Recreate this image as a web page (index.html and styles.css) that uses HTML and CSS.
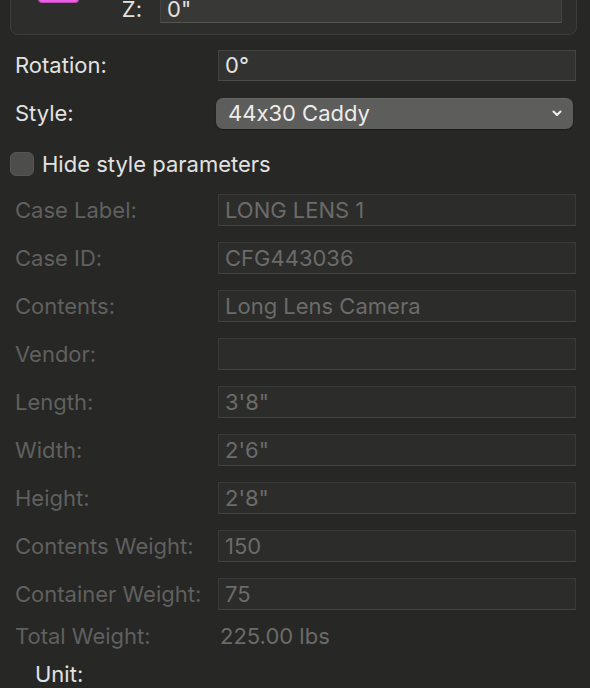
FILE: index.html
```html
<!DOCTYPE html>
<html>
<head>
<meta charset="utf-8">
<link rel="stylesheet" href="styles.css">
</head>
<body>
<div class="panel">
  <div class="group">
    <div class="swatch"></div>
    <div class="group-rows">
      <div class="grow">
        <span class="glabel">Z:</span>
        <div class="gfield">0"</div>
      </div>
    </div>
  </div>

  <div class="form">
    <div class="row row-rot">
      <span class="label">Rotation:</span>
      <div class="field">0°</div>
    </div>
    <div class="row row-style">
      <span class="label">Style:</span>
      <div class="popup">
        <span>44x30 Caddy</span>
        <svg class="chev" width="10" height="7" viewBox="0 0 10 7"><path d="M1.5 1.5 L5 5 L8.5 1.5" fill="none" stroke="#f0f0f0" stroke-width="2" stroke-linecap="round" stroke-linejoin="round"/></svg>
      </div>
    </div>
    <div class="check-row">
      <span class="checkbox"></span>
      <span class="check-label">Hide style parameters</span>
    </div>

    <div class="params">
      <div class="prow"><span class="dlabel">Case Label:</span><div class="dfield">LONG LENS 1</div></div>
      <div class="prow"><span class="dlabel">Case ID:</span><div class="dfield">CFG443036</div></div>
      <div class="prow"><span class="dlabel">Contents:</span><div class="dfield">Long Lens Camera</div></div>
      <div class="prow"><span class="dlabel">Vendor:</span><div class="dfield"></div></div>
      <div class="prow"><span class="dlabel">Length:</span><div class="dfield">3'8"</div></div>
      <div class="prow"><span class="dlabel">Width:</span><div class="dfield">2'6"</div></div>
      <div class="prow"><span class="dlabel">Height:</span><div class="dfield">2'8"</div></div>
      <div class="prow"><span class="dlabel">Contents Weight:</span><div class="dfield">150</div></div>
      <div class="prow"><span class="dlabel">Container Weight:</span><div class="dfield">75</div></div>
      <div class="prow total"><span class="dlabel">Total Weight:</span><span class="dvalue">225.00 lbs</span></div>
    </div>
    <div class="unit">Unit:</div>
  </div>
</div>
</body>
</html>
```

FILE: styles.css
```css
html, body {
  margin: 0;
  padding: 0;
  background: #272726;
  height: 100%;
  overflow: hidden;
}
body {
  font-family: Inter, "Noto Sans", sans-serif;
  font-size: 22px;
  font-feature-settings: "calt" 0;
  color: #e2e2e1;
}
.panel {
  width: 590px;
}
.group {
  margin: -14px 13px 0 10px;
  border: 1px solid #3e3e3d;
  border-radius: 8px;
  background: #2d2d2c;
  display: flex;
  align-items: flex-start;
  padding: 5px 14px 11px 28px;
}
.swatch {
  width: 39px;
  height: 10px;
  background: #ea5fe3;
  border-radius: 0 0 3px 3px;
  box-shadow: 0 0 0 1px #b94cb3;
}
.group-rows {
  flex: 1;
}
.grow {
  display: flex;
  align-items: flex-start;
  justify-content: flex-end;
}
.glabel {
  margin-right: 18px;
  padding-top: 9px;
  line-height: 17px;
}
.gfield {
  width: 402px;
  height: 31px;
  box-sizing: border-box;
  background: #383837;
  border: 1px solid #434342;
  border-bottom-color: #555554;
  padding: 8px 0 0 6px;
  line-height: 17px;
}
.form {
  padding: 15px 14px 0 15px;
}
.row {
  display: grid;
  grid-template-columns: 203px 1fr;
  align-items: center;
  height: 31px;
  line-height: 29px;
}
.label {
  color: #e2e2e1;
}
.field {
  height: 31px;
  box-sizing: border-box;
  background: #323231;
  border: 1px solid #444443;
  border-bottom-color: #4c4c4b;
  padding-left: 6px;
  line-height: 29px;
}
.row-style {
  margin-top: 17px;
  grid-template-columns: 201px 1fr;
}
.popup {
  height: 31px;
  margin-right: 3px;
  box-sizing: border-box;
  background: #5d5d5c;
  border-radius: 7px;
  box-shadow: 0 1px 1px rgba(0,0,0,0.35), inset 0 1px 0 rgba(255,255,255,0.06);
  display: flex;
  align-items: center;
  justify-content: space-between;
  padding: 0 11px 0 12px;
  color: #ececeb;
}
.chev {
  display: block;
}
.check-row {
  display: flex;
  align-items: center;
  height: 24px;
  margin: 23px 0 0 -5px;
}
.checkbox {
  width: 24px;
  height: 24px;
  box-sizing: border-box;
  border-radius: 6px;
  background: #4d4d4c;
  border: 1px solid #575756;
  margin-right: 8px;
}
.check-label {
  color: #e2e2e1;
}
.params {
  margin-top: 18px;
  display: flex;
  flex-direction: column;
  gap: 16px;
}
.prow {
  display: grid;
  grid-template-columns: 203px 1fr;
  align-items: center;
}
.dlabel {
  color: #60605e;
}
.dfield {
  height: 32px;
  box-sizing: border-box;
  background: #2c2c2b;
  border: 1px solid #393938;
  border-bottom-color: #424241;
  padding-left: 6px;
  line-height: 30px;
  color: #6b6b69;
}
.total {
  margin-top: -3px;
  grid-template-columns: 205px 1fr;
}
.dvalue {
  color: #6b6b69;
}
.unit {
  margin: 12px 0 0 20px;
  color: #e2e2e1;
}
```
